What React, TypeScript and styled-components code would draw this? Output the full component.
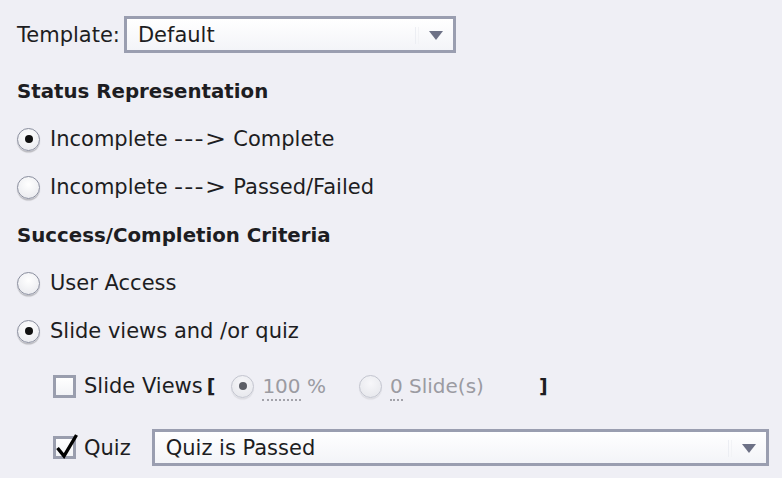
import React from 'react';
import styled, { createGlobalStyle } from 'styled-components';

const GlobalStyle = createGlobalStyle`
  html, body {
    margin: 0;
    padding: 0;
    background: #efeff5;
  }
  body {
    font-family: "DejaVu Sans", "Liberation Sans", sans-serif;
    color: #1d1d22;
  }
`;

const Panel = styled.div`
  width: 782px;
  height: 478px;
  box-sizing: border-box;
  padding: 16px 13px 0 17px;
  display: flex;
  flex-direction: column;
  font-size: 21px;
`;

const Row = styled.div<{ $height?: number; $top?: number }>`
  display: flex;
  align-items: center;
  height: ${p => p.$height ?? 48}px;
  margin-top: ${p => p.$top ?? 0}px;
  white-space: nowrap;
`;

const Heading = styled(Row)`
  font-weight: bold;
  font-size: 19.8px;
`;

const Label = styled.span<{ $gap?: number }>`
  margin-left: ${p => p.$gap ?? 0}px;
`;

// the dashes of the arrow are long in the original, so stretch them a little
const Arrow = styled.span`
  display: inline-block;
  letter-spacing: 1px;
  transform: scaleX(1.2);
  transform-origin: left center;
  margin-right: 8px;
`;

const Select = styled.div<{ $width?: number; $gap?: number }>`
  position: relative;
  display: flex;
  align-items: center;
  box-sizing: border-box;
  height: 37px;
  ${p => (p.$width ? `width: ${p.$width}px;` : 'flex: 1;')}
  margin-left: ${p => p.$gap ?? 0}px;
  padding-left: 11px;
  border: 3px solid #9a9eb0;
  background: linear-gradient(#ffffff, #f3f4f8);
  color: #1d1d22;
`;

const SelectDivider = styled.span`
  position: absolute;
  right: 34px;
  top: 8px;
  bottom: 6px;
  width: 2px;
  border-left: 1px solid #eceef3;
  border-right: 1px solid #f2f3f6;
`;

const Caret = styled.span`
  position: absolute;
  right: 10px;
  top: 12px;
  width: 0;
  height: 0;
  border-left: 7px solid transparent;
  border-right: 7px solid transparent;
  border-top: 9px solid #6d7186;
`;

const RadioCircle = styled.span<{ $checked?: boolean; $disabled?: boolean; $gap?: number }>`
  position: relative;
  flex: none;
  box-sizing: border-box;
  width: 23px;
  height: 23px;
  margin-left: ${p => p.$gap ?? 0}px;
  border-radius: 50%;
  border: 1.5px solid ${p => (p.$disabled ? '#c3c5cf' : '#8a8e9e')};
  background: ${p =>
    p.$disabled
      ? 'radial-gradient(circle at 50% 35%, #f7f7fa, #e4e5ea)'
      : 'radial-gradient(circle at 50% 35%, #ffffff, #e6e7ec)'};
  box-shadow: 0 1.5px 1px ${p => (p.$disabled ? 'rgba(0,0,0,0.08)' : 'rgba(0,0,0,0.22)')};

  &::after {
    content: '';
    display: ${p => (p.$checked ? 'block' : 'none')};
    position: absolute;
    left: 50%;
    top: 50%;
    width: 8px;
    height: 8px;
    margin: -4px 0 0 -4px;
    border-radius: 50%;
    background: ${p => (p.$disabled ? '#5c5e66' : '#111')};
  }
`;

const Box = styled.span`
  position: relative;
  flex: none;
  box-sizing: border-box;
  width: 23px;
  height: 23px;
  border: 3px solid #9a9eae;
  background: linear-gradient(#ffffff, #f2f3f6);
`;

const CheckMark = styled.svg`
  position: absolute;
  left: -3px;
  top: -3px;
  overflow: visible;
`;

const Sub = styled.div`
  display: flex;
  flex-direction: column;
  padding-left: 36px;
`;

const Bracket = styled.span<{ $gap: number }>`
  margin-left: ${p => p.$gap}px;
  font-weight: bold;
  font-size: 19px;
`;

const Muted = styled.span<{ $gap?: number }>`
  margin-left: ${p => p.$gap ?? 0}px;
  color: #9b9ba2;
  font-size: 20px;
`;

const Dotted = styled.span`
  border-bottom: 2px dotted #a3a3aa;
  padding-bottom: 1px;
`;

const Radio: React.FC<{ checked?: boolean; disabled?: boolean; gap?: number }> = ({ checked, disabled, gap }) => (
  <RadioCircle $checked={checked} $disabled={disabled} $gap={gap} />
);

const Checkbox: React.FC<{ checked?: boolean }> = ({ checked }) => (
  <Box>
    {checked && (
      <CheckMark width="23" height="23" viewBox="0 0 23 23">
        <path d="M4.5 12 L11 20 L23.5 -1" fill="none" stroke="#000" strokeWidth="3.4" strokeLinejoin="miter" />
      </CheckMark>
    )}
  </Box>
);

export default function App() {
  return (
    <>
      <GlobalStyle />
      <Panel>
        <Row $height={37}>
          <span>Template:</span>
          <Select $width={332} $gap={4}>
            Default
            <SelectDivider />
            <Caret />
          </Select>
        </Row>

        <Heading $top={14}>Status Representation</Heading>
        <Row>
          <Radio checked />
          <Label $gap={10}>Incomplete <Arrow>---&gt;</Arrow> Complete</Label>
        </Row>
        <Row>
          <Radio />
          <Label $gap={10}>Incomplete <Arrow>---&gt;</Arrow> Passed/Failed</Label>
        </Row>

        <Heading>Success/Completion Criteria</Heading>
        <Row>
          <Radio />
          <Label $gap={10}>User Access</Label>
        </Row>
        <Row>
          <Radio checked />
          <Label $gap={10}>Slide views and /or quiz</Label>
        </Row>

        <Sub>
          <Row $top={7}>
            <Checkbox />
            <Label $gap={8}>Slide Views</Label>
            <Bracket $gap={4}>[</Bracket>
            <Radio checked disabled gap={16} />
            <Muted $gap={8}><Dotted>100</Dotted> %</Muted>
            <Radio disabled gap={33} />
            <Muted $gap={8}><Dotted>0</Dotted> Slide(s)</Muted>
            <Bracket $gap={55}>]</Bracket>
          </Row>
          <Row $height={37} $top={19}>
            <Checkbox checked />
            <Label $gap={8}>Quiz</Label>
            <Select $gap={21}>
              Quiz is Passed
              <SelectDivider />
              <Caret />
            </Select>
          </Row>
        </Sub>
      </Panel>
    </>
  );
}
